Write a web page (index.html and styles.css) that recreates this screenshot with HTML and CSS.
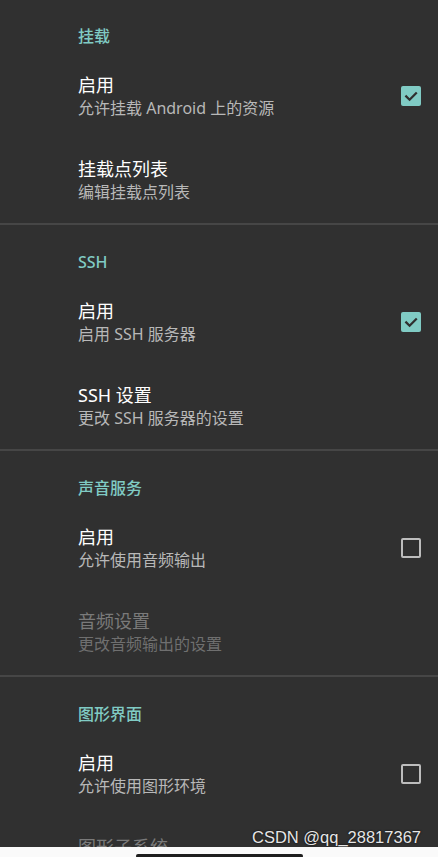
FILE: index.html
```html
<!DOCTYPE html>
<html lang="zh-CN">
<head>
<meta charset="utf-8">
<title>设置</title>
<link rel="stylesheet" href="styles.css">
</head>
<body>
<main class="prefs">
  <section class="group first">
    <h2 class="group-title">挂载</h2>
    <div class="item">
      <div class="texts">
        <div class="title">启用</div>
        <div class="summary">允许挂载 Android 上的资源</div>
      </div>
      <span class="check on"><svg viewBox="0 0 20 20" width="20" height="20"><path d="M5.2 10.4 L8.6 13.8 L15 7.2" fill="none" stroke="#2f2f2f" stroke-width="2.2" stroke-linecap="square"/></svg></span>
    </div>
    <div class="item">
      <div class="texts">
        <div class="title">挂载点列表</div>
        <div class="summary">编辑挂载点列表</div>
      </div>
    </div>
  </section>
  <section class="group">
    <h2 class="group-title">SSH</h2>
    <div class="item">
      <div class="texts">
        <div class="title">启用</div>
        <div class="summary">启用 SSH 服务器</div>
      </div>
      <span class="check on"><svg viewBox="0 0 20 20" width="20" height="20"><path d="M5.2 10.4 L8.6 13.8 L15 7.2" fill="none" stroke="#2f2f2f" stroke-width="2.2" stroke-linecap="square"/></svg></span>
    </div>
    <div class="item">
      <div class="texts">
        <div class="title">SSH 设置</div>
        <div class="summary">更改 SSH 服务器的设置</div>
      </div>
    </div>
  </section>
  <section class="group">
    <h2 class="group-title">声音服务</h2>
    <div class="item">
      <div class="texts">
        <div class="title">启用</div>
        <div class="summary">允许使用音频输出</div>
      </div>
      <span class="check off"></span>
    </div>
    <div class="item disabled">
      <div class="texts">
        <div class="title">音频设置</div>
        <div class="summary">更改音频输出的设置</div>
      </div>
    </div>
  </section>
  <section class="group">
    <h2 class="group-title">图形界面</h2>
    <div class="item">
      <div class="texts">
        <div class="title">启用</div>
        <div class="summary">允许使用图形环境</div>
      </div>
      <span class="check off"></span>
    </div>
    <div class="item disabled">
      <div class="texts">
        <div class="title">图形子系统</div>
        <div class="summary">更改图形子系统的设置</div>
      </div>
    </div>
  </section>
</main>
<div class="watermark">CSDN @qq_28817367</div>
<div class="navbar"><span class="handle"></span></div>
</body>
</html>
```

FILE: styles.css
```css
html, body {
  margin: 0;
  padding: 0;
  height: 100%;
  overflow: hidden;
  background: #303030;
}
body {
  font-family: "Noto Sans", "Noto Sans CJK SC", sans-serif;
  position: relative;
}
.prefs {
  display: flex;
  flex-direction: column;
}
.group {
  border-top: 2px solid #464646;
}
.group.first {
  border-top: none;
}
.group-title {
  margin: 0;
  padding: 27px 17px 9px 78px;
  font-size: 16px;
  line-height: 20px;
  font-weight: 500;
  color: #80cbc4;
}
.group.first .group-title {
  padding-top: 26px;
}
.item {
  display: flex;
  align-items: center;
  height: 84px;
  box-sizing: border-box;
  padding: 0 17px 0 78px;
}
.texts {
  flex: 1;
  display: flex;
  flex-direction: column;
  padding-bottom: 1px;
}
.title {
  font-size: 18px;
  line-height: 23px;
  font-weight: 400;
  color: #ffffff;
}
.summary {
  font-size: 16px;
  line-height: 22px;
  font-weight: 400;
  color: #b8b8b8;
}
.item.disabled .title {
  color: #7a7a7a;
}
.item.disabled .summary {
  color: #6f6f6f;
}
.check {
  width: 20px;
  height: 20px;
  box-sizing: border-box;
  border-radius: 2px;
  margin-bottom: 3px;
  display: block;
}
.check svg {
  display: block;
}
.check.on {
  background: #80cbc4;
}
.check.off {
  border: 2.5px solid #bdbdbd;
}
.watermark {
  position: absolute;
  right: 17px;
  top: 826px;
  font-family: "Liberation Sans", Arial, sans-serif;
  font-size: 16.5px;
  line-height: 22px;
  color: #e6e6e6;
  text-shadow: 0 0 2px #000;
}
.navbar {
  position: absolute;
  left: 0;
  right: 0;
  top: 847px;
  height: 10px;
  background: #fafafa;
}
.handle {
  position: absolute;
  left: 136px;
  width: 167px;
  top: 7px;
  height: 4px;
  background: #1e1e1e;
  border-radius: 2px;
}
```
